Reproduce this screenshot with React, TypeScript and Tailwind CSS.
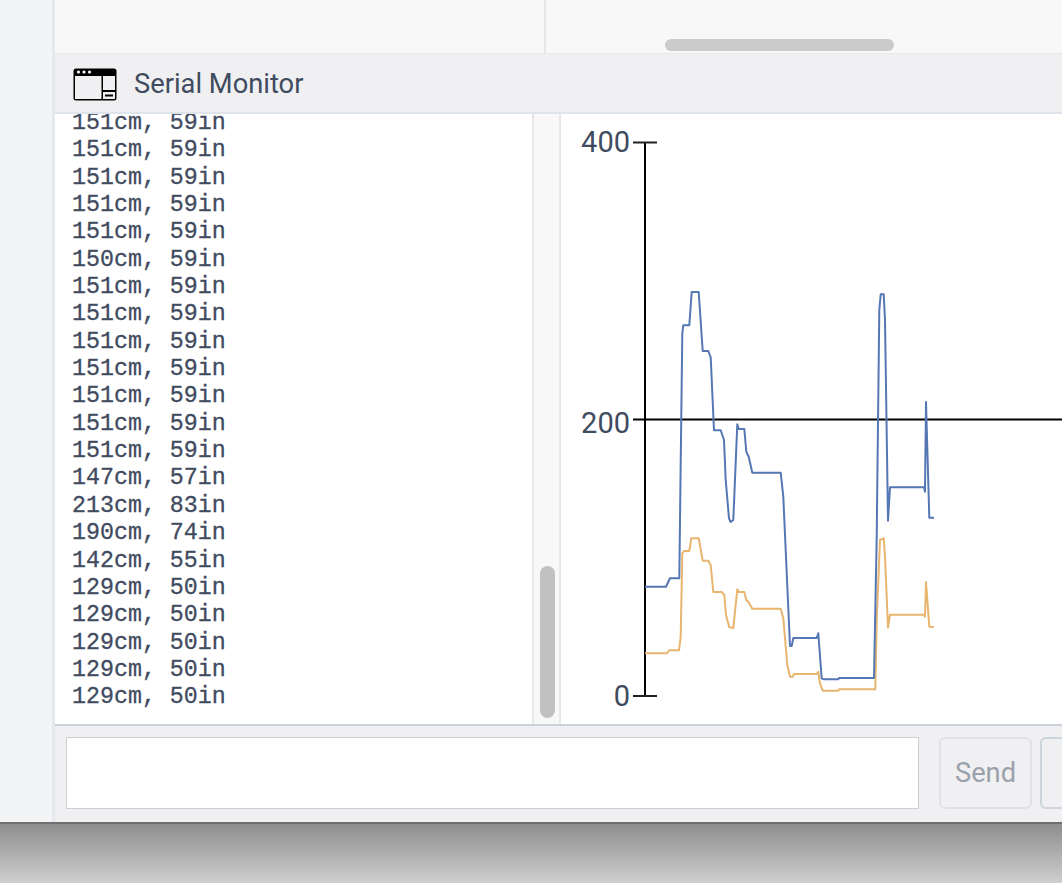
const lines = [
  "151cm, 59in", "151cm, 59in", "151cm, 59in", "151cm, 59in", "151cm, 59in",
  "150cm, 59in", "151cm, 59in", "151cm, 59in", "151cm, 59in", "151cm, 59in",
  "151cm, 59in", "151cm, 59in", "151cm, 59in", "147cm, 57in", "213cm, 83in",
  "190cm, 74in", "142cm, 55in", "129cm, 50in", "129cm, 50in", "129cm, 50in",
  "129cm, 50in", "129cm, 50in",
];

const bluePoints =
  "645,586.7 666,586.7 670,578.3 679.3,578.3 682.3,333.3 683.3,325.3 689.3,325.3 691.7,292 698.7,292 702.7,351 708.3,351 710.7,357.3 714,430.3 720.7,430.3 724,440 725.7,480 729,518.3 730.7,522 733.3,520 737.3,424.3 738.7,429 744.3,429 746.3,451.7 748.7,456.7 752.3,472.7 780.7,472.7 783.3,496.7 790,646 791.7,646 793.3,638 816.7,638 818.3,633.3 821.7,678.3 824,679.3 838.3,679.3 839,678 874,678 876.7,536.7 879.3,310 880.7,294.3 883.7,294.3 885,320 888,520.7 890,487.3 924,487.3 925,491.7 926,402 929.3,517.7 934,517.7";

const orangePoints =
  "645,653.3 666.7,653.3 669.3,650.3 679,650.3 680.7,636.7 682.3,553.3 684,551 689.3,551 691.3,538.3 698.7,538.3 702.7,560.7 708.3,560.7 710.7,565 713.3,592 721.7,592 724.3,595 726,615 729.3,627.3 733.3,628 737.3,589.3 738.7,592 744.3,592 746.3,600 748.7,602.3 752.3,608.7 780.7,608.7 783.3,618.3 787.3,665 790,676.7 792.7,676.7 794,674 816.7,674 818.3,671.7 820,683.3 822.7,690.7 838.3,690.7 839,689.3 875.3,689.3 876.7,620 880,540 883.7,538.3 885,556.7 888,627.7 890,614.7 924,614.7 925,616.7 926,582 929.3,626.7 934,627";

function MonitorIcon() {
  return (
    <svg width="44" height="33" viewBox="0 0 44 33" className="-mt-[2px] shrink-0">
      <rect x="0.5" y="0.5" width="43" height="32" rx="2.5" fill="#000" />
      <rect x="2" y="8" width="26.5" height="23" fill="#f0f0f2" />
      <rect x="30" y="8" width="12" height="14" fill="#f0f0f2" />
      <rect x="30" y="24" width="12" height="7" fill="#f0f0f2" />
      <rect x="32" y="26.5" width="8" height="2" fill="#000" />
      <circle cx="5.5" cy="4" r="1.6" fill="#fff" />
      <circle cx="11" cy="4" r="1.6" fill="#fff" />
      <circle cx="16.5" cy="4" r="1.6" fill="#fff" />
    </svg>
  );
}

function Chart() {
  return (
    <svg viewBox="561 114 501 610" className="block h-full w-full">
      <g stroke="#000" strokeWidth="2" fill="none">
        <line x1="645" y1="142" x2="645" y2="696" />
        <line x1="633" y1="142.5" x2="657" y2="142.5" stroke="#222" />
        <line x1="633" y1="419.5" x2="1062" y2="419.5" />
        <line x1="633" y1="696" x2="657" y2="696" stroke="#222" />
      </g>
      <polyline points={orangePoints} fill="none" stroke="#e8b56f" strokeWidth="2" strokeLinejoin="round" />
      <polyline points={bluePoints} fill="none" stroke="#5577b3" strokeWidth="2" strokeLinejoin="round" />
      <g fill="#3f4c60" fontFamily="Roboto, sans-serif" fontSize="29" textAnchor="end">
        <text x="630" y="152">400</text>
        <text x="630" y="433">200</text>
        <text x="630" y="706">0</text>
      </g>
    </svg>
  );
}

export default function App() {
  return (
    <div className="flex h-[886px] w-[1062px] flex-col overflow-hidden bg-white">
      <div className="flex h-[822px] shrink-0">
        <div className="w-[55px] shrink-0 border-r-[3px] border-[#e6e8eb] bg-[#f2f4f6]" />
        <div className="flex min-w-0 flex-1 flex-col">
          {/* editor pane cut off at the top */}
          <div className="relative flex h-[54px] shrink-0 border-b border-[#e4e8ec] bg-[#f8f8f8]">
            <div className="w-[491px] shrink-0 border-r-2 border-[#e6e6e6]" />
            <div className="absolute left-[610px] top-[39px] h-3 w-[229px] rounded-md bg-[#cbcbcb]" />
          </div>

          <div className="flex h-[60px] shrink-0 items-center gap-[17px] border-b-2 border-[#dfe4ea] bg-[#f0f0f2] pl-[18px] pt-[4px]">
            <MonitorIcon />
            <span className="font-['Roboto',sans-serif] text-[27.3px] leading-none text-[#3f4c60]">Serial Monitor</span>
          </div>

          <div className="flex min-h-0 flex-1">
            <div className="w-[477px] shrink-0 overflow-hidden bg-white pl-[17px]">
              <div className="-mt-[4px] font-['Liberation_Mono',monospace] text-[23.3px] leading-[27.35px] text-[#414b60] [-webkit-text-stroke:0.3px_#414b60]">
                {lines.map((line, i) => (
                  <div key={i} className="h-[27.35px] whitespace-pre">{line}</div>
                ))}
              </div>
            </div>
            <div className="flex w-[29px] shrink-0 flex-col justify-end border-x-2 border-[#e8e8e8] bg-[#f8f8f8] pb-[6px] pl-[6px]">
              <div className="h-[152px] w-[15px] rounded-lg bg-[#c1c1c1]" />
            </div>
            <div className="min-w-0 flex-1 bg-white">
              <Chart />
            </div>
          </div>

          <div className="flex h-[98px] shrink-0 items-center border-t-2 border-[#ccd2d9] bg-[#f0f0f2] pb-[2px] pl-[11px]">
            <div className="h-[72px] w-[853px] shrink-0 border-[1.5px] border-[#cfcfcf] bg-white" />
            <button className="ml-[20px] h-[72px] w-[93px] shrink-0 rounded-md border-2 border-[#dfe3e8] font-['Roboto',sans-serif] text-[27.3px] text-[#9aa1ab]">
              Send
            </button>
            <div className="ml-[8px] h-[72px] w-[60px] shrink-0 rounded-md border-2 border-[#ccd4dc]" />
          </div>
        </div>
      </div>
      <div className="h-[61px] shrink-0 border-t-2 border-[#6f6f6f] bg-gradient-to-b from-[#8e8e8e] to-[#cfcfcf]" />
    </div>
  );
}
